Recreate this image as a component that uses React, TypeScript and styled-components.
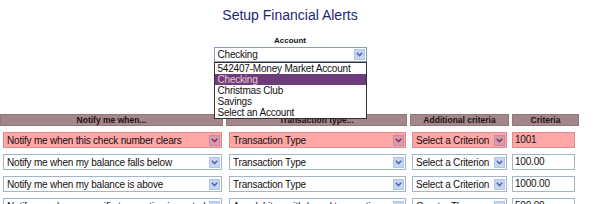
import React from 'react';
import styled, {createGlobalStyle} from 'styled-components';

const GlobalStyle = createGlobalStyle`
  body {
    margin: 0;
    background: #ffffff;
    font-family: "Liberation Sans", Arial, sans-serif;
  }
`;

const Page = styled.div`
  width: 580px;
  height: 204px;
  overflow: hidden;
  display: flex;
  flex-direction: column;
  align-items: center;
`;

const Title = styled.h1`
  margin: 7px 0 0;
  font-size: 14px;
  font-weight: normal;
  color: #1f1f78;
  line-height: 16px;
`;

const AccountBlock = styled.div`
  margin-top: 13px;
  display: flex;
  flex-direction: column;
  align-items: center;
  position: relative;
`;

const Label = styled.div`
  font-size: 8px;
  font-weight: bold;
  color: #111;
  line-height: 9px;
`;

const SelectBox = styled.div<{ $pink?: boolean; $h?: number }>`
  box-sizing: border-box;
  width: 100%;
  height: ${p => p.$h ?? 16}px;
  display: flex;
  align-items: center;
  justify-content: space-between;
  background: ${p => (p.$pink ? '#ffa6a6' : '#ffffff')};
  border: 1px solid ${p => (p.$pink ? '#e48a8c' : '#a4b6c6')};
  padding: 0 1px 0 3px;
  font-size: 10px;
  letter-spacing: -0.2px;
  color: #111;
  white-space: nowrap;
  overflow: hidden;
`;

const Arrow = styled.span<{ $pink?: boolean }>`
  flex: none;
  width: 11px;
  height: 11px;
  display: flex;
  align-items: center;
  justify-content: center;
  box-sizing: border-box;
  background: ${p => (p.$pink ? '#d69aae' : '#c7d5f3')};
  border: 1px solid ${p => (p.$pink ? '#c98aa0' : '#b3c4e8')};
  color: ${p => (p.$pink ? '#7a3b5c' : '#4668ad')};
`;

const AccountSelect = styled(SelectBox)`
  width: 153px;
  margin-top: 2px;
  border-color: #8c9db2;
`;

const List = styled.ul`
  position: absolute;
  top: 26px;
  left: 0;
  width: 153px;
  margin: 0;
  padding: 0;
  list-style: none;
  box-sizing: border-box;
  background: #ffffff;
  border: 1px solid #333;
  z-index: 2;
`;

const Option = styled.li<{ $active?: boolean }>`
  height: 11px;
  line-height: 11px;
  padding-left: 3px;
  font-size: 10px;
  letter-spacing: -0.2px;
  background: ${p => (p.$active ? '#6b3d7b' : 'transparent')};
  color: ${p => (p.$active ? '#f3c4d6' : '#111')};
  white-space: nowrap;
`;

const Grid = styled.div`
  margin-top: 52px;
  align-self: flex-start;
  display: grid;
  grid-template-columns: 223px 181px 99px 67px;
  column-gap: 3px;
  row-gap: 6px;
`;

const Head = styled.div`
  height: 12px;
  box-sizing: border-box;
  background: #a3878a;
  border: 1px solid #927679;
  font-size: 8.5px;
  font-weight: bold;
  color: #1e1212;
  text-align: center;
  line-height: 10px;
`;

const Cell = styled.div<{ $pad?: string }>`
  padding: ${p => p.$pad ?? '0 1px 0 3px'};
`;

const TextField = styled.div<{ $pink?: boolean }>`
  box-sizing: border-box;
  height: 16px;
  width: 63px;
  background: ${p => (p.$pink ? '#ffa6a6' : '#ffffff')};
  border: 1px solid ${p => (p.$pink ? '#e48a8c' : '#a4b6c6')};
  font-size: 10px;
  letter-spacing: -0.2px;
  line-height: 14px;
  padding-left: 2px;
  color: #111;
`;

const Chevron = () => (
  <svg width="7" height="5" viewBox="0 0 7 5">
    <polyline points="0.8,0.8 3.5,3.6 6.2,0.8" fill="none" stroke="currentColor" strokeWidth="1.5"/>
  </svg>
);

const Select: React.FC<{ text: string; pink?: boolean }> = ({text, pink}) => (
  <SelectBox $pink={pink}>
    <span>{text}</span>
    <Arrow $pink={pink}><Chevron/></Arrow>
  </SelectBox>
);

const rows = [
  {notify: 'Notify me when this check number clears', crit: '1001', pink: true},
  {notify: 'Notify me when my balance falls below', crit: '100.00'},
  {notify: 'Notify me when my balance is above', crit: '1000.00'},
];

const accounts = ['542407-Money Market Account', 'Checking', 'Christmas Club', 'Savings', 'Select an Account'];

export default function App() {
  return (
    <Page>
      <GlobalStyle/>
      <Title>Setup Financial Alerts</Title>
      <AccountBlock>
        <Label>Account</Label>
        <AccountSelect $h={15}>
          <span>Checking</span>
          <Arrow><Chevron/></Arrow>
        </AccountSelect>
        <List>
          {accounts.map(a => <Option key={a} $active={a === 'Checking'}>{a}</Option>)}
        </List>
      </AccountBlock>
      <Grid>
        <Head>Notify me when...</Head>
        <Head>Transaction type...</Head>
        <Head>Additional criteria</Head>
        <Head>Criteria</Head>
        {rows.map(r => (
          <React.Fragment key={r.notify}>
            <Cell><Select text={r.notify} pink={r.pink}/></Cell>
            <Cell><Select text="Transaction Type" pink={r.pink}/></Cell>
            <Cell $pad="0 2px"><Select text="Select a Criterion" pink={r.pink}/></Cell>
            <Cell $pad="0"><TextField $pink={r.pink}>{r.crit}</TextField></Cell>
          </React.Fragment>
        ))}
        <Cell><Select text="Notify me when a specific transaction is posted"/></Cell>
        <Cell><Select text="Any debit or withdrawal transaction"/></Cell>
        <Cell $pad="0 2px"><Select text="Greater Than"/></Cell>
        <Cell $pad="0"><TextField>500.00</TextField></Cell>
      </Grid>
    </Page>
  );
}
